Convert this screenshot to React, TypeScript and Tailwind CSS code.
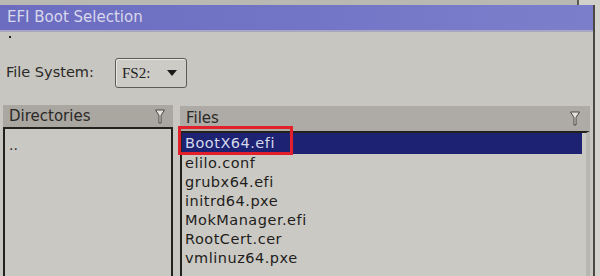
import React from 'react';

const files = [
  'BootX64.efi',
  'elilo.conf',
  'grubx64.efi',
  'initrd64.pxe',
  'MokManager.efi',
  'RootCert.cer',
  'vmlinuz64.pxe',
];

// small funnel icon used in the panel headers
const FilterIcon = () => (
  <svg width="10" height="15" viewBox="0 0 10 15" className="shrink-0">
    <path d="M0.5 1 H9.5 L6 6.5 V14 H4 V6.5 Z" fill="#e4e2dd" stroke="#4a4844" strokeWidth="1" />
  </svg>
);

const font = 'font-["DejaVu_Sans",sans-serif]';

export default function App() {
  return (
    <div className={`w-[600px] h-[276px] overflow-hidden bg-[#c3c1bc] ${font}`}>
      <div className="h-[5px] flex">
        <div className="w-[577px] bg-[#bab8b3]" />
        <div className="w-[2px] bg-[#5b5852]" />
        <div className="flex-1 bg-[#d2d0cb]" />
      </div>
      <div className="flex h-[271px]">
        {/* window */}
        <div className="w-[593px] flex flex-col bg-[#c8c6c1]">
          <div className="h-[27px] flex items-center px-[7px] bg-gradient-to-r from-[#6b6cc0] via-[#7275c6] to-[#7b7fcb] border-b-2 border-[#a9a6c4]">
            <span className="text-[15px] text-[#d9d7ec] leading-none">EFI Boot Selection</span>
          </div>
          <div className="pl-[9px] pt-[4px] h-[4px]">
            <div className="w-[2px] h-[2px] bg-[#222]" />
          </div>
          <div className="flex items-center h-[30px] mt-[22px] pl-[6px]">
            <span className="text-[14.5px] text-[#2a2926] w-[109px]">File System:</span>
            <div className="w-[72px] h-[30px] rounded-[3px] border border-[#5e5b55] bg-[#cdcbc5] shadow-[inset_1px_1px_0_#e9e7e2] flex items-center pl-[6px] pr-[9px] justify-between">
              <span className="text-[15px] text-[#22211e] font-['Liberation_Serif',serif]">FS2:</span>
              <svg width="10" height="6" viewBox="0 0 10 6">
                <path d="M0 0 H10 L5 6 Z" fill="#1c1b19" />
              </svg>
            </div>
          </div>
          <div className="flex mt-[17px] flex-1 min-h-0">
            {/* directories */}
            <div className="ml-[3px] w-[170px] flex flex-col">
              <div className="h-[22px] bg-[#aaa7a1] flex items-center justify-between pl-[6px] pr-[8px]">
                <span className="text-[15px] text-[#2b2a27] leading-none">Directories</span>
                <FilterIcon />
              </div>
              <div className="flex-1 border-l-2 border-t-2 border-r-2 border-[#22211e] bg-[#cac8c2] pl-[4px] pt-[4px]">
                <span className="text-[14px] text-[#2b2a27] leading-none">..</span>
              </div>
            </div>
            {/* files */}
            <div className="ml-[7px] w-[410px] flex flex-col mt-[1px]">
              <div className="h-[25px] bg-[#aeaba6] flex items-center justify-between pl-[6px] pr-[10px]">
                <span className="text-[15px] text-[#2b2a27] leading-none">Files</span>
                <FilterIcon />
              </div>
              <div className="flex-1 border-l-2 border-t-2 border-[#22211e] bg-[#cbc9c4] pr-[4px] border-r-4 border-r-[#b9b7b2] relative">
                {files.map((f, i) => (
                  <div
                    key={f}
                    className={`flex items-center pl-[3px] text-[14.5px] tracking-[0.5px] leading-none ${
                      i === 0 ? 'bg-[#1d2372] text-[#d6d8ec] h-[21px]' : 'text-[#1e1d1b] h-[19px]'
                    }`}
                  >
                    {f}
                  </div>
                ))}
                <div className="absolute left-[-4px] top-[-7px] w-[115px] h-[29px] border-[3px] border-[#e2202b]" />
              </div>
            </div>
          </div>
        </div>
        <div className="w-[2px] bg-[#4b4843]" />
        <div className="flex-1 bg-[#d4d2cd]" />
      </div>
    </div>
  );
}
